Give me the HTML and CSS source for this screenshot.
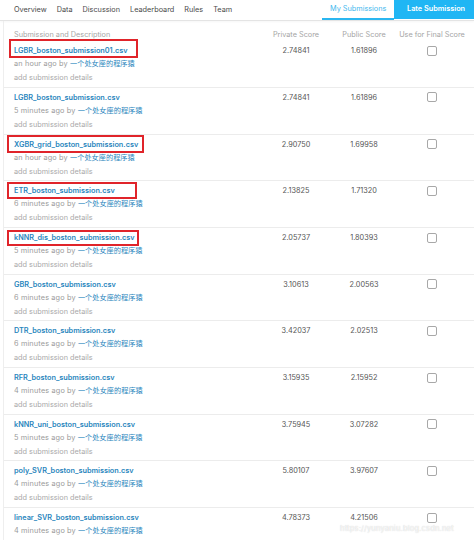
FILE: index.html
```html
<!DOCTYPE html>
<html>
<head>
<meta charset="utf-8">
<link rel="stylesheet" href="styles.css">
</head>
<body>
<div class="page">
  <nav class="nav">
    <div class="tabs">
      <span>Overview</span><span>Data</span><span>Discussion</span><span>Leaderboard</span><span>Rules</span><span>Team</span>
    </div>
    <div class="right-tabs">
      <span class="my-sub">My Submissions</span>
      <span class="late-sub">Late Submission</span>
    </div>
  </nav>
  <div class="panel">
    <div class="head row-grid">
      <span class="h-desc">Submission and Description</span>
      <span class="h-col">Private Score</span>
      <span class="h-col">Public Score</span>
      <span class="h-col">Use for Final Score</span>
    </div>

    <div class="row row-grid">
      <div class="desc"><a class="file">LGBR_boston_submission01.csv</a><div class="meta">an hour ago by <a class="user">一个处女座的程序猿</a></div><div class="add">add submission details</div></div>
      <span class="score">2.74841</span><span class="score">1.61896</span><span class="check"><i class="box"></i></span>
      <span class="mark mark1"></span>
    </div>
    <div class="row row-grid">
      <div class="desc"><a class="file">LGBR_boston_submission.csv</a><div class="meta">5 minutes ago by <a class="user">一个处女座的程序猿</a></div><div class="add">add submission details</div></div>
      <span class="score">2.74841</span><span class="score">1.61896</span><span class="check"><i class="box"></i></span>
    </div>
    <div class="row row-grid">
      <div class="desc"><a class="file">XGBR_grid_boston_submission.csv</a><div class="meta">an hour ago by <a class="user">一个处女座的程序猿</a></div><div class="add">add submission details</div></div>
      <span class="score">2.90750</span><span class="score">1.69958</span><span class="check"><i class="box"></i></span>
      <span class="mark mark3"></span>
    </div>
    <div class="row row-grid">
      <div class="desc"><a class="file">ETR_boston_submission.csv</a><div class="meta">6 minutes ago by <a class="user">一个处女座的程序猿</a></div><div class="add">add submission details</div></div>
      <span class="score">2.13825</span><span class="score">1.71320</span><span class="check"><i class="box"></i></span>
      <span class="mark mark4"></span>
    </div>
    <div class="row row-grid">
      <div class="desc"><a class="file">kNNR_dis_boston_submission.csv</a><div class="meta">5 minutes ago by <a class="user">一个处女座的程序猿</a></div><div class="add">add submission details</div></div>
      <span class="score">2.05737</span><span class="score">1.80393</span><span class="check"><i class="box"></i></span>
      <span class="mark mark5"></span>
    </div>
    <div class="row row-grid">
      <div class="desc"><a class="file">GBR_boston_submission.csv</a><div class="meta">6 minutes ago by <a class="user">一个处女座的程序猿</a></div><div class="add">add submission details</div></div>
      <span class="score">3.10613</span><span class="score">2.00563</span><span class="check"><i class="box"></i></span>
    </div>
    <div class="row row-grid">
      <div class="desc"><a class="file">DTR_boston_submission.csv</a><div class="meta">6 minutes ago by <a class="user">一个处女座的程序猿</a></div><div class="add">add submission details</div></div>
      <span class="score">3.42037</span><span class="score">2.02513</span><span class="check"><i class="box"></i></span>
    </div>
    <div class="row row-grid">
      <div class="desc"><a class="file">RFR_boston_submission.csv</a><div class="meta">4 minutes ago by <a class="user">一个处女座的程序猿</a></div><div class="add">add submission details</div></div>
      <span class="score">3.15935</span><span class="score">2.15952</span><span class="check"><i class="box"></i></span>
    </div>
    <div class="row row-grid">
      <div class="desc"><a class="file">kNNR_uni_boston_submission.csv</a><div class="meta">5 minutes ago by <a class="user">一个处女座的程序猿</a></div><div class="add">add submission details</div></div>
      <span class="score">3.75945</span><span class="score">3.07282</span><span class="check"><i class="box"></i></span>
    </div>
    <div class="row row-grid">
      <div class="desc"><a class="file">poly_SVR_boston_submission.csv</a><div class="meta">4 minutes ago by <a class="user">一个处女座的程序猿</a></div><div class="add">add submission details</div></div>
      <span class="score">5.80107</span><span class="score">3.97607</span><span class="check"><i class="box"></i></span>
    </div>
    <div class="row row-grid">
      <div class="desc"><a class="file">linear_SVR_boston_submission.csv</a><div class="meta">4 minutes ago by <a class="user">一个处女座的程序猿</a></div><div class="add">add submission details</div></div>
      <span class="score">4.78373</span><span class="score">4.21506</span><span class="check"><i class="box"></i></span>
    </div>
  </div>
  <div class="watermark">https://yunyaniu.blog.csdn.net</div>
</div>
</body>
</html>
```

FILE: styles.css
```css
* { box-sizing: border-box; }
html, body { margin: 0; padding: 0; background: #fff; }
body {
  font-family: Inter, "Noto Sans", "Noto Sans CJK SC", sans-serif;
  font-size: 7.3px;
  color: #444;
  width: 474px;
  height: 540px;
  overflow: hidden;
}
.page { position: relative; width: 474px; height: 540px; }

.nav {
  display: flex;
  justify-content: space-between;
  height: 21px;
  border-bottom: 1px solid #e4e4e4;
  box-shadow: 0 1px 2px rgba(0,0,0,0.04);
}
.tabs {
  display: flex;
  gap: 10px;
  padding-left: 14px;
  line-height: 19px;
  color: #4a4a4a;
  white-space: nowrap;
}
.right-tabs { display: flex; }
.my-sub {
  color: #3fb8ee;
  padding: 0 0 0 8px;
  line-height: 18px;
  height: 20px;
  border-bottom: 2px solid #2ab6f0;
  width: 72px;
  white-space: nowrap;
}
.late-sub {
  background: #20b6f4;
  color: #fff;
  font-weight: 600;
  width: 80px;
  height: 19px;
  line-height: 18px;
  padding-left: 13px;
  white-space: nowrap;
}

.panel {
  margin-left: 3px;
  border-left: 1px solid #eeeeee;
}
.row-grid {
  display: grid;
  grid-template-columns: 1fr 68px 68px 68px;
  padding: 0 8px 0 10px;
}
.head {
  height: 20.3px;
  padding-top: 8px;
  line-height: 11px;
  color: #a5a5a5;
}
.h-col { text-align: center; white-space: nowrap; }

.row {
  position: relative;
  height: 46.7px;
  border-bottom: 1px solid #ececec;
  padding-top: 3px;
}
.desc { line-height: 13px; }
.file {
  color: #2a86bd;
  font-weight: 600;
  display: block;
  white-space: nowrap;
}
.meta { color: #9a9a9a; white-space: nowrap; letter-spacing: 0.15px; }
.user {
  color: #2a86bd;
  font-family: "Noto Sans CJK SC", sans-serif;
  font-size: 7.2px;
  letter-spacing: 0;
}
.add { color: #a9a9a9; line-height: 14px; margin-top: 1px; white-space: nowrap; }

.score {
  text-align: center;
  color: #555;
  line-height: 13px;
}
.check { display: flex; justify-content: center; padding-top: 1.5px; }
.box {
  display: block;
  width: 10px;
  height: 10px;
  border: 1px solid #a8a8a8;
  border-radius: 2px;
  background: #fff;
}

.mark {
  position: absolute;
  border: 2px solid #e0242a;
}
.mark1 { left: 5px; top: -2.3px; width: 129px; height: 19px; }
.mark3 { left: 3px; top: 0.3px; width: 137px; height: 18px; }
.mark4 { left: 3px; top: 0.4px; width: 130px; height: 17px; }
.mark5 { left: 3px; top: 2px; width: 132px; height: 16px; }

.watermark {
  position: absolute;
  left: 340px;
  top: 524px;
  font-size: 7.5px;
  color: rgba(255,255,255,0.85);
  text-shadow: 0 0 1px rgba(0,0,0,0.25);
  letter-spacing: 0.2px;
  white-space: nowrap;
}
```
